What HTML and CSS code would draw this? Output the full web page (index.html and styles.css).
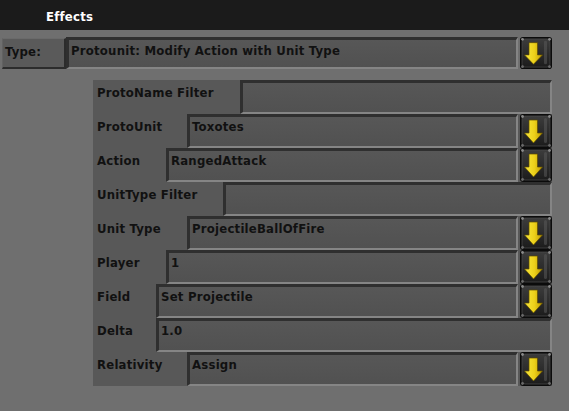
FILE: index.html
```html
<!DOCTYPE html>
<html>
<head>
<meta charset="utf-8">
<link rel="stylesheet" href="styles.css">
</head>
<body>
<svg class="defs" width="0" height="0" aria-hidden="true">
  <defs>
    <linearGradient id="bezel" x1="0" y1="0" x2="0" y2="1">
      <stop offset="0" stop-color="#3c3c3c"/>
      <stop offset="1" stop-color="#1c1c1c"/>
    </linearGradient>
    <linearGradient id="gold" x1="0" y1="0" x2="1" y2="0">
      <stop offset="0" stop-color="#f8e83c"/>
      <stop offset="0.55" stop-color="#ecd01a"/>
      <stop offset="1" stop-color="#bc9800"/>
    </linearGradient>
    <symbol id="drop" viewBox="0 0 32 34" preserveAspectRatio="none">
      <rect x="0" y="0" width="32" height="34" rx="3" fill="#0b0b0b"/>
      <rect x="2" y="2" width="28" height="30" rx="3" fill="url(#bezel)" stroke="#4a4a4a" stroke-width="0.8"/>
      <rect x="24" y="4" width="3" height="25" rx="1.5" fill="#5a5a5a" opacity="0.55"/>
      <circle cx="2.5" cy="2.5" r="1.4" fill="#8a8a8a"/>
      <circle cx="29.5" cy="2.5" r="1.4" fill="#8a8a8a"/>
      <circle cx="2.5" cy="31.5" r="1.4" fill="#6a6a6a"/>
      <circle cx="29.5" cy="31.5" r="1.4" fill="#6a6a6a"/>
      <path d="M9 6 H17.5 V19 H22.5 L13.5 29 L4.5 19 H9 Z" fill="url(#gold)" stroke="#5c4a00" stroke-width="0.7"/>
    </symbol>
  </defs>
</svg>

<div class="header">Effects</div>

<div class="type-row">
  <div class="type-label">Type:</div>
  <div class="field">Protounit: Modify Action with Unit Type</div>
  <svg class="drop"><use href="#drop"/></svg>
</div>

<div class="panel">
  <div class="row">
    <div class="label label--xl">ProtoName Filter</div>
    <div class="field"></div>
  </div>
  <div class="row">
    <div class="label label--l">ProtoUnit</div>
    <div class="field">Toxotes</div>
    <svg class="drop"><use href="#drop"/></svg>
  </div>
  <div class="row">
    <div class="label label--m">Action</div>
    <div class="field">RangedAttack</div>
    <svg class="drop"><use href="#drop"/></svg>
  </div>
  <div class="row">
    <div class="label label--xl2">UnitType Filter</div>
    <div class="field"></div>
  </div>
  <div class="row">
    <div class="label label--l">Unit Type</div>
    <div class="field">ProjectileBallOfFire</div>
    <svg class="drop"><use href="#drop"/></svg>
  </div>
  <div class="row">
    <div class="label label--m">Player</div>
    <div class="field">1</div>
    <svg class="drop"><use href="#drop"/></svg>
  </div>
  <div class="row">
    <div class="label label--s">Field</div>
    <div class="field">Set Projectile</div>
    <svg class="drop"><use href="#drop"/></svg>
  </div>
  <div class="row">
    <div class="label label--s">Delta</div>
    <div class="field">1.0</div>
  </div>
  <div class="row">
    <div class="label label--l">Relativity</div>
    <div class="field">Assign</div>
    <svg class="drop"><use href="#drop"/></svg>
  </div>
</div>
</body>
</html>
```

FILE: styles.css
```css
html, body {
  margin: 0;
  padding: 0;
}
body {
  background: #6f6f6f;
  font-family: "DejaVu Sans Condensed", "DejaVu Sans", Verdana, sans-serif;
  font-weight: bold;
  font-size: 13px;
  letter-spacing: 0.22px;
  line-height: 14px;
  color: #111;
  width: 569px;
  height: 411px;
  overflow: hidden;
}
.defs {
  position: absolute;
  width: 0;
  height: 0;
}
.header {
  height: 30px;
  box-sizing: border-box;
  background: #1b1b1b;
  color: #fff;
  padding: 10px 0 0 46px;
}
.type-row {
  display: flex;
  height: 32px;
  margin: 7px 0 0 2px;
  width: 550px;
}
.type-label {
  width: 64px;
  box-sizing: border-box;
  background: #5a5a5a;
  border-top: 1px solid #6a6a6a;
  border-left: 1px solid #626262;
  border-bottom: 2px solid #2c2c2c;
  border-right: 2px solid #2c2c2c;
  padding: 6px 0 0 2px;
  margin-top: 1px;
}
.field {
  flex: 1;
  box-sizing: border-box;
  background: linear-gradient(#575757, #515151);
  border-top: 3px solid #2f2f2f;
  border-left: 3px solid #2f2f2f;
  border-bottom: 2px solid #858585;
  border-right: 2px solid #858585;
  padding: 3px 0 0 2px;
  white-space: nowrap;
  overflow: hidden;
}
.type-row .field {
  padding-top: 4px;
}
.drop {
  width: 32px;
  height: 100%;
  margin-left: 2px;
  flex: none;
}
.panel {
  margin: 11px 0 0 93px;
  width: 459px;
  background: #585858;
}
.row {
  display: flex;
  height: 34px;
}
.label {
  flex: none;
  box-sizing: border-box;
  padding: 6px 0 0 4px;
  white-space: nowrap;
}
.label--xl { width: 147px; }
.label--xl2 { width: 130px; }
.label--l { width: 94px; }
.label--m { width: 73px; }
.label--s { width: 63px; }
```
